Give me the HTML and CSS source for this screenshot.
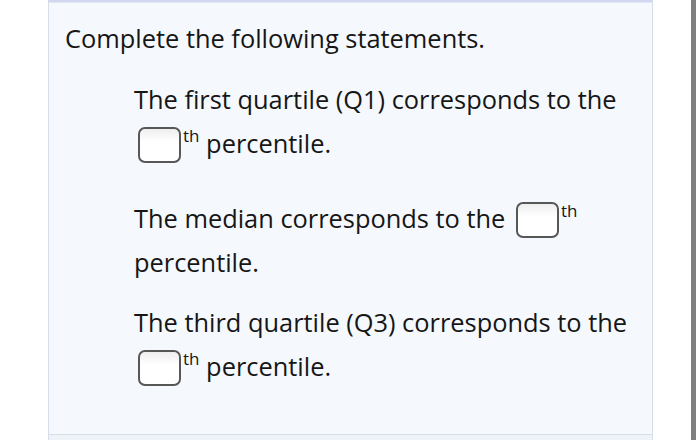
FILE: index.html
```html
<!DOCTYPE html>
<html lang="en">
<head>
<meta charset="utf-8">
<title>Complete the following statements</title>
<link rel="stylesheet" href="styles.css">
</head>
<body>
<div class="page">
  <div class="col">
    <section class="panel">
      <p class="lead">Complete the following statements.</p>
      <div class="items">
        <p class="item">The first quartile (Q1) corresponds to the <span class="ans"><span class="blank"></span><sup class="ord">th</sup></span> percentile.</p>
        <p class="item item-mid">The median corresponds to the <span class="ans"><span class="blank"></span><sup class="ord">th</sup></span> percentile.</p>
        <p class="item">The third quartile (Q3) corresponds to the <span class="ans"><span class="blank"></span><sup class="ord">th</sup></span> percentile.</p>
      </div>
    </section>
    <div class="panel-next"></div>
  </div>
  <div class="bar"></div>
</div>
</body>
</html>
```

FILE: styles.css
```css
html, body {
  margin: 0;
  padding: 0;
  background: #ffffff;
}

.page {
  display: flex;
  height: 440px;
  overflow: hidden;
  font-family: "Open Sans", "DejaVu Sans", sans-serif;
  color: #161616;
}

.col {
  margin-left: 48px;
  width: 605px;
  display: flex;
  flex-direction: column;
}

.panel {
  box-sizing: border-box;
  height: 435px;
  flex: none;
  background: #f5f9fd;
  border: 1px solid #d6dee9;
  border-top: 2px solid #d3d6f0;
  box-shadow: inset 0 1px 0 #e3e8f2;
  padding: 14px 16px 0 16px;
}

.panel-next {
  flex: 1;
  background: #eef3f9;
  border-left: 1px solid #d6dee9;
  border-right: 1px solid #d6dee9;
}

.lead {
  margin: 0 0 17px 0;
  font-size: 25.4px;
  line-height: 44px;
}

.items {
  margin-left: 69px;
  display: flex;
  flex-direction: column;
  gap: 16px;
}

.item {
  margin: 0;
  font-size: 25.4px;
  line-height: 44px;
}

.item-mid {
  margin-top: 15px;
}

.ans {
  white-space: nowrap;
}

.blank {
  display: inline-block;
  box-sizing: border-box;
  width: 43px;
  height: 36px;
  margin-left: 4px;
  vertical-align: -10px;
  border: 2px solid #575757;
  border-radius: 7px;
  background: linear-gradient(#eeeeee, #ffffff 40%);
}

.ord {
  font-size: 17px;
  line-height: 1;
  vertical-align: 11px;
  margin-left: 2px;
}

.bar {
  margin-left: auto;
  margin-right: 4px;
  width: 5px;
  height: 440px;
  background: #808080;
}
```
